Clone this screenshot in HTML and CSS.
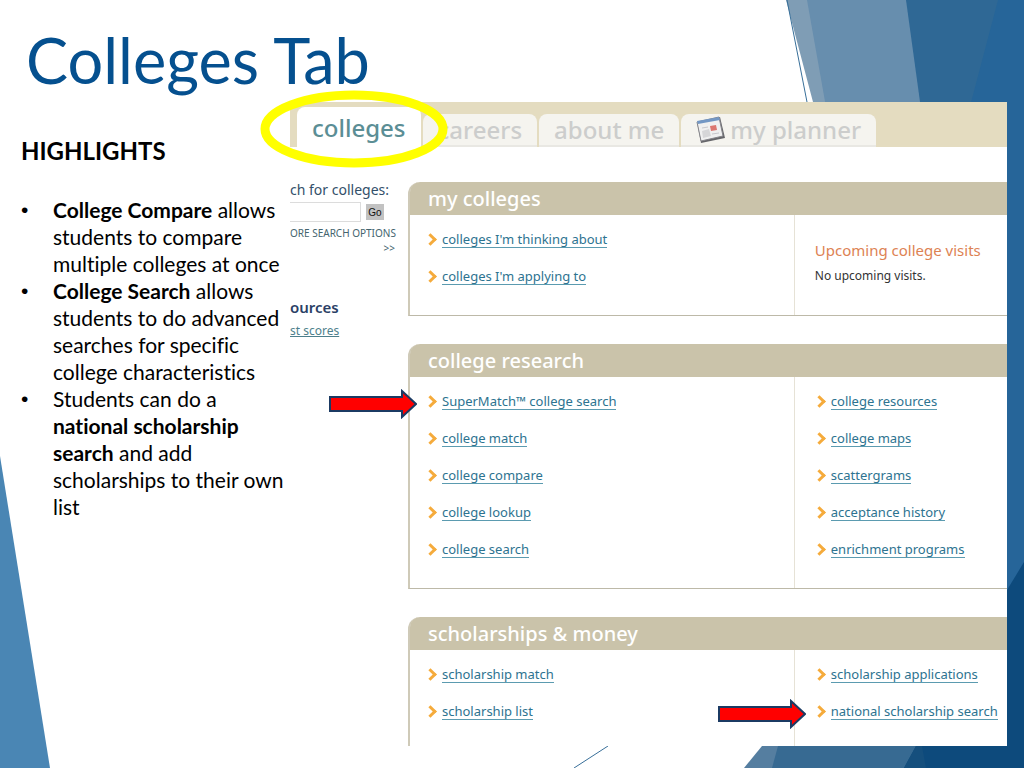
FILE: index.html
```html
<!DOCTYPE html>
<html lang="en">
<head>
  <meta charset="UTF-8">
  <meta name="viewport" content="width=device-width, initial-scale=1.0">
  <title>Colleges Tab</title>
  <link rel="stylesheet" href="styles.css">
</head>
<body>
  <!-- slide background -->
  <svg class="backdrop" viewBox="0 0 1024 768" preserveAspectRatio="none" aria-hidden="true">
    <polygon points="0,456 50,768 0,768" fill="#4a86b4"/>
    <polygon points="786,0 1024,0 1024,400 890,400 813,102" fill="#7f9db5"/>
    <polygon points="807,0 1024,0 1024,400 878,400" fill="#678eae"/>
    <polygon points="906,0 1024,0 1024,400 961,400" fill="#2f6895"/>
    <polygon points="998,0 1024,0 1024,600 840,600" fill="#266599"/>
    <line x1="787" y1="0" x2="807" y2="102" stroke="#386f99" stroke-width="1"/>
    <polygon points="744,768 762,746 1000,746 1000,768" fill="#557ea0"/>
    <polygon points="772,768 778,746 1000,746 1000,768" fill="#376a92"/>
    <polygon points="904,768 916,746 1007,590 1024,562 1024,768" fill="#0d4a7c"/>
    <polygon points="916,746 922,746 926,768 904,768" fill="#154f7d"/>
    <line x1="574" y1="768" x2="608" y2="746" stroke="#386f99" stroke-width="1"/>
  </svg>

  <header>
    <h1>Colleges Tab</h1>
  </header>

  <div class="slide">
    <div class="notes">
      <h2>HIGHLIGHTS</h2>
      <ul>
        <li><b>College Compare</b> allows students to compare multiple colleges at once</li>
        <li><b>College Search</b> allows students to do advanced searches for specific college characteristics</li>
        <li>Students can do a <b>national scholarship search</b> and add scholarships to their own list</li>
      </ul>
    </div>

    <div class="portal">
      <nav class="tabs">
        <a href="#" class="tab active">colleges
          <svg class="ring" viewBox="0 0 188 78" aria-hidden="true">
            <ellipse cx="94" cy="39" rx="89" ry="34" fill="none" stroke="#ffff00" stroke-width="9"/>
          </svg>
        </a>
        <a href="#" class="tab">careers</a>
        <a href="#" class="tab">about me</a>
        <a href="#" class="tab">
          <svg class="calendar" viewBox="0 0 30 28" aria-hidden="true">
            <polygon points="1,6 24,1 29,22 5,27" fill="#66666a"/>
            <polygon points="1,6 23,1 27,20 5,25" fill="#f0f0f0" stroke="#85858a" stroke-width="1"/>
            <polygon points="1,5 23,1 24,4 2,8" fill="#7397c4"/>
            <polygon points="6,15 13,13 15,20 7,22" fill="#d6d6d8"/>
            <polygon points="14,10 20,9 21,14 15,15" fill="#dc7770"/>
            <path d="M6 12l6-1M16 18l7-1" stroke="#c8c8cc"/>
          </svg>
          my planner</a>
      </nav>

      <div class="content">
        <div class="sidebar">
          <form>
            <label for="search">ch for colleges:</label>
            <div class="search-row">
              <input type="text" id="search">
              <button type="button">Go</button>
            </div>
          </form>
          <a href="#" class="more">ORE SEARCH OPTIONS<br>&gt;&gt;</a>
          <h3>ources</h3>
          <a href="#" class="scores">st scores</a>
        </div>

        <main>
          <section class="box">
            <h2>my colleges</h2>
            <div class="columns">
              <ul>
                <li><a href="#">colleges I'm thinking about</a></li>
                <li><a href="#">colleges I'm applying to</a></li>
              </ul>
              <div class="visits">
                <h3>Upcoming college visits</h3>
                <p>No upcoming visits.</p>
              </div>
            </div>
          </section>

          <section class="box">
            <h2>college research</h2>
            <div class="columns">
              <ul>
                <li>
                  <svg class="arrow" viewBox="0 0 88 30" aria-hidden="true"><path d="M1 8H73V2L87 15L73 28V22H1Z" fill="#ff0000" stroke="#1b3a63" stroke-width="2"/></svg>
                  <a href="#">SuperMatch™ college search</a>
                </li>
                <li><a href="#">college match</a></li>
                <li><a href="#">college compare</a></li>
                <li><a href="#">college lookup</a></li>
                <li><a href="#">college search</a></li>
              </ul>
              <ul>
                <li><a href="#">college resources</a></li>
                <li><a href="#">college maps</a></li>
                <li><a href="#">scattergrams</a></li>
                <li><a href="#">acceptance history</a></li>
                <li><a href="#">enrichment programs</a></li>
              </ul>
            </div>
          </section>

          <section class="box last">
            <h2>scholarships &amp; money</h2>
            <div class="columns">
              <ul>
                <li><a href="#">scholarship match</a></li>
                <li><a href="#">scholarship list</a></li>
              </ul>
              <ul>
                <li><a href="#">scholarship applications</a></li>
                <li>
                  <svg class="arrow" viewBox="0 0 88 30" aria-hidden="true"><path d="M1 8H73V2L87 15L73 28V22H1Z" fill="#ff0000" stroke="#1b3a63" stroke-width="2"/></svg>
                  <a href="#">national scholarship search</a>
                </li>
              </ul>
            </div>
          </section>
        </main>
      </div>
    </div>
  </div>
</body>
</html>
```

FILE: styles.css
```css
* {
  box-sizing: border-box;
}

body {
  margin: 0;
  min-height: 100vh;
  position: relative;
  background-color: #fff;
  font-family: "Noto Sans", "Open Sans", sans-serif;
}

h1, h2, h3, p, ul {
  margin: 0;
  padding: 0;
}

ul {
  list-style: none;
}

.backdrop {
  position: absolute;
  top: 0;
  left: 0;
  width: 100%;
  height: 100%;
  z-index: -1;
}

header {
  height: 102px;
  padding: 22px 26px 0;
}

h1 {
  font-family: Lato, sans-serif;
  font-size: 63px;
  line-height: 76px;
  font-weight: 400;
  color: #05508f;
}

.slide {
  display: flex;
  align-items: flex-start;
  padding-right: 17px;
}

/* left side notes */
.notes {
  flex: 0 0 290px;
  padding: 34px 0 0 21px;
  font-family: Lato, sans-serif;
  font-variant-ligatures: none;
  color: #000;
}

.notes h2 {
  font-size: 24px;
  line-height: 30px;
  margin-bottom: 30px;
}

.notes li {
  position: relative;
  padding-left: 32px;
  font-size: 21px;
  line-height: 27px;
}

.notes li::before {
  content: "•";
  position: absolute;
  left: 0;
  font-family: "Liberation Sans", sans-serif;
}

/* portal */
.portal {
  flex: 1;
  min-width: 0;
  background-color: #fff;
}

.tabs {
  display: flex;
  align-items: flex-end;
  gap: 2px;
  height: 45px;
  padding-left: 7px;
  background-color: #e4dcc0;
}

.tab {
  display: flex;
  align-items: center;
  gap: 4px;
  height: 33px;
  padding: 0 15px;
  border-radius: 8px 8px 0 0;
  background-color: #f5f4ef;
  border-bottom: 2px solid #e9e8e3;
  color: #cccdcc;
  font-size: 24px;
  font-weight: 500;
  text-decoration: none;
  white-space: nowrap;
}

.tab.active {
  position: relative;
  height: 40px;
  background-color: #fff;
  border-bottom: none;
  color: #5b8e95;
}

.ring {
  position: absolute;
  top: -17px;
  left: -37px;
  width: 188px;
  height: 78px;
}

.calendar {
  width: 30px;
  height: 28px;
}

.content {
  display: flex;
  padding-top: 35px;
}

.sidebar {
  flex: 0 0 118px;
  overflow: hidden;
  color: #33506a;
}

.sidebar label {
  display: block;
  font-size: 14px;
  line-height: 16px;
}

.search-row {
  display: flex;
  align-items: center;
  gap: 5px;
  margin-top: 4px;
}

.search-row input {
  width: 71px;
  height: 20px;
  border: 1px solid #dcdcdc;
  border-left: none;
}

.search-row button {
  width: 18px;
  height: 16px;
  padding: 0;
  border: none;
  background-color: #c2c2c2;
  font-family: "Liberation Sans", sans-serif;
  font-size: 10px;
  color: #111;
}

.more {
  display: block;
  width: 105px;
  margin-top: 4px;
  font-size: 10px;
  line-height: 15px;
  text-align: right;
  text-decoration: none;
  white-space: nowrap;
  color: #44646e;
}

.sidebar h3 {
  margin-top: 40px;
  font-size: 15px;
  line-height: 22px;
  font-weight: 600;
  color: #2b3f66;
}

.scores {
  font-size: 12px;
  color: #4d7f8c;
}

main {
  flex: 1;
  min-width: 0;
}

.box {
  margin-bottom: 28px;
  border-left: 2px solid #cfcab8;
  border-bottom: 1px solid #bdb9a8;
  border-top-left-radius: 12px;
}

.box.last {
  margin-bottom: 0;
  border-bottom: none;
}

.box h2 {
  padding-left: 18px;
  border-top-left-radius: 10px;
  background-color: #cac3aa;
  color: #fff;
  font-size: 20px;
  line-height: 33px;
  font-weight: 500;
}

.columns {
  display: grid;
  grid-template-columns: 9fr 5fr;
}

.columns > * {
  padding: 6px 0 20px 16px;
}

.last .columns > * {
  padding-bottom: 16px;
}

.columns > * + * {
  padding-left: 20px;
  border-left: 1px solid #e6e2d6;
}

.box li {
  display: flex;
  align-items: center;
  position: relative;
  height: 37px;
  font-size: 13px;
  white-space: nowrap;
}

.box li::before {
  content: "";
  width: 6px;
  height: 6px;
  margin-right: 7px;
  border-top: 3px solid #f5ab3c;
  border-right: 3px solid #f5ab3c;
  transform: rotate(45deg);
}

.box li a {
  line-height: 15px;
  border-bottom: 1px solid #5b9bb0;
  color: #2d7390;
  text-decoration: none;
}

.arrow {
  position: absolute;
  right: calc(100% + 9px);
  width: 88px;
  height: 30px;
  margin-top: 4px;
}

.visits h3 {
  margin-top: 18px;
  font-size: 15px;
  line-height: 22px;
  font-weight: 400;
  color: #dd8253;
}

.visits p {
  margin-top: 5px;
  font-size: 12px;
  line-height: 20px;
  color: #333;
}
```
